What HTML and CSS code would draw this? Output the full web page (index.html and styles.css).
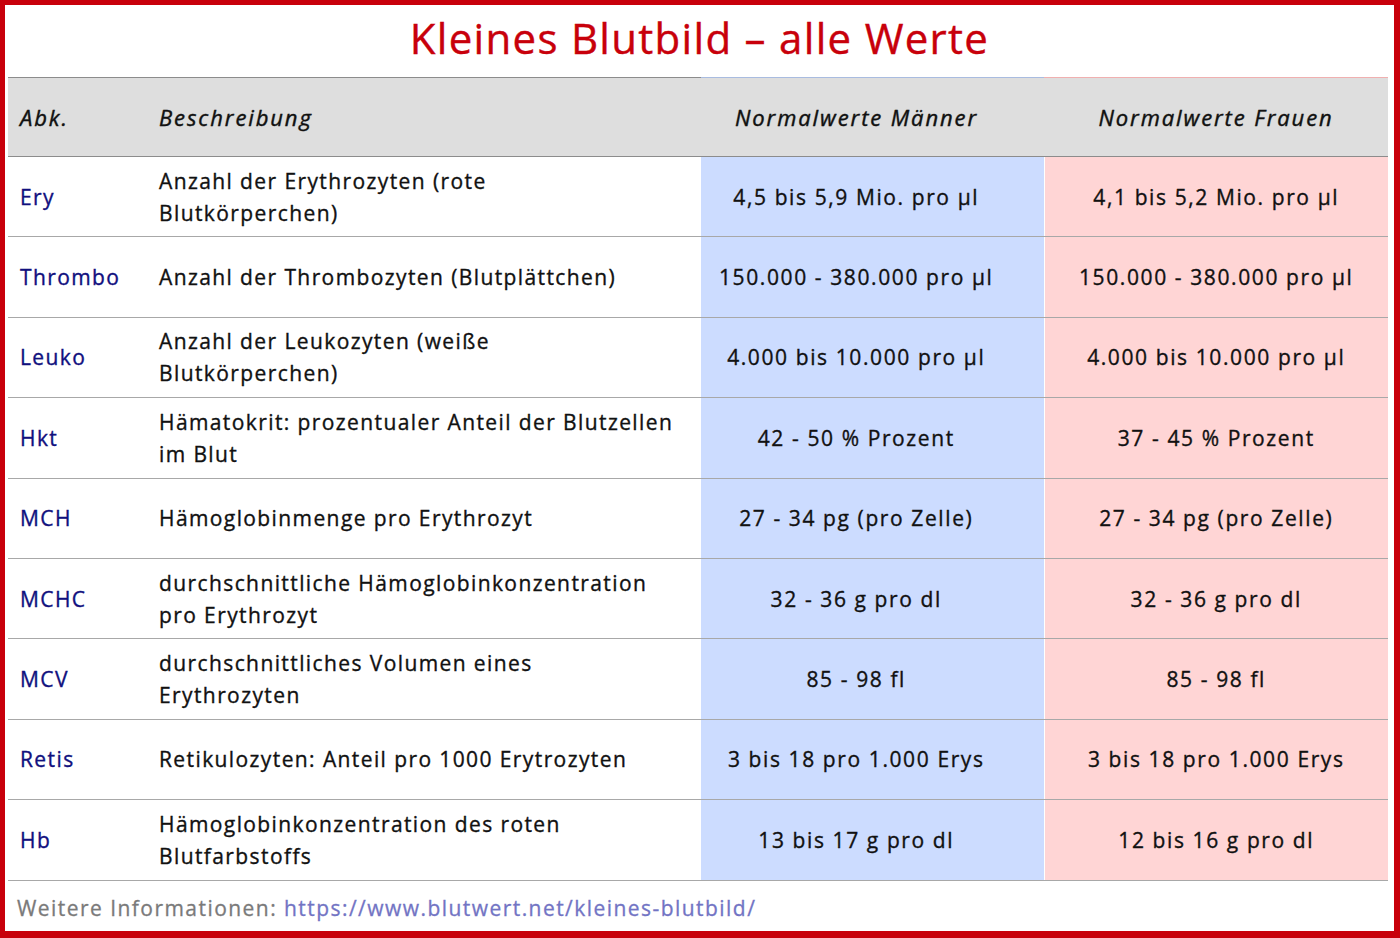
FILE: index.html
```html
<!DOCTYPE html>
<html lang="de">
<head>
<meta charset="utf-8">
<title>Kleines Blutbild – alle Werte</title>
<link rel="stylesheet" href="styles.css">
</head>
<body>
<div class="frame">
  <h1 class="title">Kleines Blutbild – alle Werte</h1>
  <table class="values">
    <thead>
      <tr>
        <th class="c-abk">Abk.</th>
        <th class="c-desc">Beschreibung</th>
        <th class="c-men">Normalwerte Männer</th>
        <th class="c-women">Normalwerte Frauen</th>
      </tr>
    </thead>
    <tbody>
      <tr><td class="c-abk">Ery</td><td class="c-desc">Anzahl der Erythrozyten (rote<br>Blutkörperchen)</td><td class="c-men">4,5 bis 5,9 Mio. pro µl</td><td class="c-women">4,1 bis 5,2 Mio. pro µl</td></tr>
      <tr><td class="c-abk">Thrombo</td><td class="c-desc">Anzahl der Thrombozyten (Blutplättchen)</td><td class="c-men">150.000 - 380.000 pro µl</td><td class="c-women">150.000 - 380.000 pro µl</td></tr>
      <tr><td class="c-abk">Leuko</td><td class="c-desc">Anzahl der Leukozyten (weiße<br>Blutkörperchen)</td><td class="c-men">4.000 bis 10.000 pro µl</td><td class="c-women">4.000 bis 10.000 pro µl</td></tr>
      <tr><td class="c-abk">Hkt</td><td class="c-desc">Hämatokrit: prozentualer Anteil der Blutzellen<br>im Blut</td><td class="c-men">42 - 50 % Prozent</td><td class="c-women">37 - 45 % Prozent</td></tr>
      <tr><td class="c-abk">MCH</td><td class="c-desc">Hämoglobinmenge pro Erythrozyt</td><td class="c-men">27 - 34 pg (pro Zelle)</td><td class="c-women">27 - 34 pg (pro Zelle)</td></tr>
      <tr><td class="c-abk">MCHC</td><td class="c-desc">durchschnittliche Hämoglobinkonzentration<br>pro Erythrozyt</td><td class="c-men">32 - 36 g pro dl</td><td class="c-women">32 - 36 g pro dl</td></tr>
      <tr><td class="c-abk">MCV</td><td class="c-desc">durchschnittliches Volumen eines<br>Erythrozyten</td><td class="c-men">85 - 98 fl</td><td class="c-women">85 - 98 fl</td></tr>
      <tr><td class="c-abk">Retis</td><td class="c-desc">Retikulozyten: Anteil pro 1000 Erytrozyten</td><td class="c-men">3 bis 18 pro 1.000 Erys</td><td class="c-women">3 bis 18 pro 1.000 Erys</td></tr>
      <tr><td class="c-abk">Hb</td><td class="c-desc">Hämoglobinkonzentration des roten<br>Blutfarbstoffs</td><td class="c-men">13 bis 17 g pro dl</td><td class="c-women">12 bis 16 g pro dl</td></tr>
    </tbody>
  </table>
  <p class="footer">Weitere Informationen: <a class="link" href="#">https://www.blutwert.net/kleines-blutbild/</a></p>
</div>
</body>
</html>
```

FILE: styles.css
```css
html, body {
  margin: 0;
  padding: 0;
  background: #ffffff;
}

.frame {
  box-sizing: border-box;
  width: 1400px;
  height: 938px;
  border-style: solid;
  border-color: #c8000b;
  border-width: 5px 6px 7px 5px;
  padding: 0 0 0 3px;
  font-family: "Open Sans", "Lato", sans-serif;
  color: #111111;
  overflow: hidden;
}

.title {
  margin: 0;
  height: 72px;
  line-height: 66px;
  text-align: center;
  font-size: 42px;
  font-weight: 400;
  letter-spacing: 1.3px;
  color: #c8000b;
  -webkit-text-stroke: 0.4px #c8000b;
  padding-right: 3px;
}

.values {
  width: 1380px;
  border-collapse: collapse;
  table-layout: fixed;
  font-size: 21px;
}

.values th,
.values td {
  padding: 0;
  vertical-align: middle;
  border-bottom: 1px solid #a8a8a8;
}

.values th {
  height: 78px;
  background: #dedede;
  font-style: italic;
  font-weight: 400;
  font-size: 22px;
  letter-spacing: 1.9px;
  text-align: left;
  border-top: 1px solid #8c8c8c;
  border-bottom: 1px solid #8c8c8c;
  -webkit-text-stroke: 0.3px #111111;
  text-shadow: 0 0 1px rgba(0, 0, 0, 0.3);
}

.values td {
  height: 79.4px;
  line-height: 32px;
  letter-spacing: 1.4px;
  -webkit-text-stroke: 0.35px currentColor;
}

.c-abk {
  width: 140px;
  padding-left: 12px !important;
  box-sizing: border-box;
}

.c-desc {
  width: 553px;
  padding-left: 11px !important;
  box-sizing: border-box;
}

.c-men,
.c-women {
  text-align: center !important;
}

.c-men {
  width: 343px;
  padding-right: 32px !important;
  box-sizing: border-box;
}

td.c-men,
td.c-women {
  letter-spacing: 1.6px;
}

td.c-men {
  background: #ccdcff;
  border-right: 1px solid #ffffff;
}

td.c-women {
  background: #ffd5d5;
}

th.c-men {
  border-top-color: #a9bce0;
}

th.c-women {
  border-top-color: #f0b0b0;
}

td.c-abk {
  color: #10107e;
}

.footer {
  margin: 0;
  padding: 13px 0 0 9px;
  font-size: 21px;
  letter-spacing: 1.45px;
  color: #7a7a7a;
  -webkit-text-stroke: 0.3px currentColor;
}

.link {
  color: #7274c4;
  text-decoration: none;
}
```
